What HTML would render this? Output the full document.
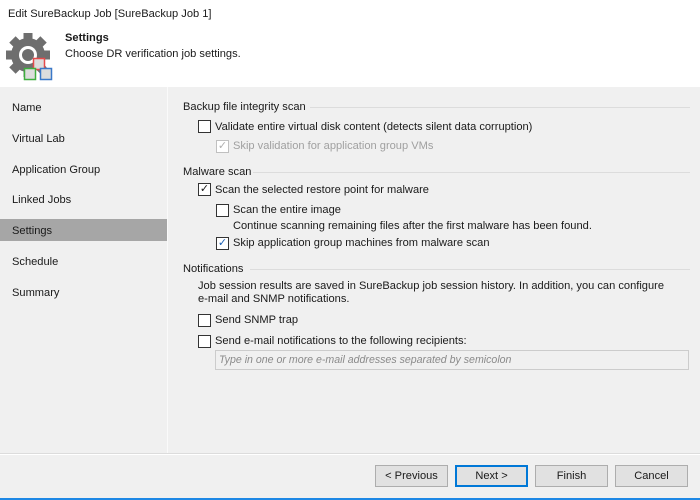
<!DOCTYPE html>
<html><head><style>
*{margin:0;padding:0;box-sizing:border-box}
body{width:700px;height:500px;background:#f0f0f0;font-family:"Liberation Sans",sans-serif;font-size:11.1px;color:#1a1a1a;position:relative;overflow:hidden}
.a{position:absolute;white-space:nowrap;line-height:14px}
.cb{position:absolute;width:13px;height:13px;border:1px solid #333;background:#fff}
.cb.dis{border-color:#c0c0c0}
.hr{position:absolute;height:1px;background:#dcdcdc}
.btn{position:absolute;top:465px;width:73px;height:22px;border:1px solid #adadad;background:#e1e1e1;text-align:center;line-height:20px;font-size:11.1px}
</style></head><body>
<div style="position:absolute;left:0;top:0;width:700px;height:87px;background:#fff"></div>
<div class="a" style="left:8px;top:7px">Edit SureBackup Job [SureBackup Job 1]</div>
<div class="a" style="left:65px;top:31px;font-weight:bold">Settings</div>
<div class="a" style="left:65px;top:47px">Choose DR verification job settings.</div>
<svg style="position:absolute;left:4px;top:30px" width="52" height="54" viewBox="0 0 52 54">
<g fill="#6e6e6e" transform="translate(24,25)">
<circle r="17"/>
<g id="t"><rect x="-4.5" y="-22" width="9" height="8"/></g>
<use href="#t" transform="rotate(45)"/><use href="#t" transform="rotate(90)"/><use href="#t" transform="rotate(135)"/><use href="#t" transform="rotate(180)"/><use href="#t" transform="rotate(225)"/><use href="#t" transform="rotate(270)"/><use href="#t" transform="rotate(315)"/>
<circle r="9" fill="#fff"/><circle r="6" fill="#6e6e6e"/>
</g>
<rect x="29.5" y="28.5" width="11" height="11" fill="#ddd" stroke="#e64a4a" stroke-width="1.5"/>
<rect x="20.5" y="38.5" width="11" height="11" fill="#ddd" stroke="#3fae3f" stroke-width="1.5"/>
<rect x="36.5" y="38.5" width="11" height="11" fill="#ddd" stroke="#3a78c8" stroke-width="1.5"/>
</svg>
<div style="position:absolute;left:167px;top:87px;width:1px;height:366px;background:#fafafa"></div>
<div style="position:absolute;left:0;top:219px;width:167px;height:22px;background:#a6a6a6"></div>
<div class="a" style="left:12px;top:101px">Name</div>
<div class="a" style="left:12px;top:132px">Virtual Lab</div>
<div class="a" style="left:12px;top:163px">Application Group</div>
<div class="a" style="left:12px;top:193px">Linked Jobs</div>
<div class="a" style="left:12px;top:224px">Settings</div>
<div class="a" style="left:12px;top:255px">Schedule</div>
<div class="a" style="left:12px;top:286px">Summary</div>

<div class="a" style="left:183px;top:100px">Backup file integrity scan</div><div class="hr" style="left:310px;top:107px;width:380px"></div>
<div class="cb" style="left:198px;top:120px"></div><div class="a" style="left:215px;top:120px">Validate entire virtual disk content (detects silent data corruption)</div>
<div class="cb dis" style="left:216px;top:140px;color:#b0b0b0;font-size:11px;line-height:11px;text-align:center">✓</div><div class="a" style="left:233px;top:139px;color:#a0a0a0">Skip validation for application group VMs</div>
<div class="a" style="left:183px;top:165px">Malware scan</div><div class="hr" style="left:253px;top:172px;width:437px"></div>
<div class="cb" style="left:198px;top:183px;font-size:11px;line-height:11px;text-align:center">✓</div><div class="a" style="left:215px;top:183px">Scan the selected restore point for malware</div>
<div class="cb" style="left:216px;top:204px"></div><div class="a" style="left:233px;top:203px">Scan the entire image</div>
<div class="a" style="left:233px;top:219px">Continue scanning remaining files after the first malware has been found.</div>
<div class="cb" style="left:216px;top:237px;font-size:11px;line-height:11px;text-align:center;color:#1a5fb4">✓</div><div class="a" style="left:233px;top:236px">Skip application group machines from malware scan</div>
<div class="a" style="left:183px;top:262px">Notifications</div><div class="hr" style="left:250px;top:269px;width:440px"></div>
<div class="a" style="left:198px;top:279px">Job session results are saved in SureBackup job session history. In addition, you can configure</div>
<div class="a" style="left:198px;top:292px">e-mail and SNMP notifications.</div>
<div class="cb" style="left:198px;top:314px"></div><div class="a" style="left:215px;top:313px">Send SNMP trap</div>
<div class="cb" style="left:198px;top:335px"></div><div class="a" style="left:215px;top:334px">Send e-mail notifications to the following recipients:</div>
<div style="position:absolute;left:215px;top:350px;width:474px;height:20px;border:1px solid #ccc;background:#f0f0f0"></div>
<div class="a" style="left:219px;top:353px;font-style:italic;color:#8a8a8a;font-size:10.6px">Type in one or more e-mail addresses separated by semicolon</div>

<div style="position:absolute;left:0;top:453px;width:700px;height:1px;background:#dcdcdc"></div>
<div style="position:absolute;left:0;top:454px;width:700px;height:1px;background:#fff"></div>
<div class="btn" style="left:375px">&lt; Previous</div>
<div class="btn" style="left:455px;border:2px solid #0078d7;line-height:18px">Next &gt;</div>
<div class="btn" style="left:535px">Finish</div>
<div class="btn" style="left:615px">Cancel</div>
<div style="position:absolute;left:0;top:498px;width:700px;height:2px;background:#1e88e5"></div>
</body></html>
